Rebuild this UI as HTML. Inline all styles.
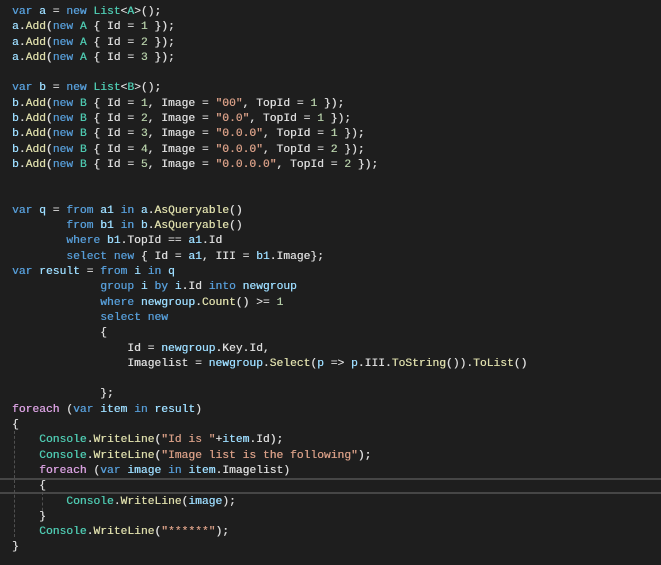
<!DOCTYPE html>
<html><head><meta charset="utf-8"><style>
html,body{margin:0;padding:0;background:#1e1e1e;width:661px;height:565px;overflow:hidden}
pre{margin:0;position:absolute;left:12px;top:5px;font-family:"Liberation Mono","DejaVu Sans Mono",monospace;font-size:11.3px;line-height:15.3px;color:#dcdcdc;text-shadow:0.3px 0 0 currentColor}
.k{color:#569cd6}.c{color:#d8a0df}.t{color:#4ec9b0}.m{color:#dcdcaa}.s{color:#d69d85}.n{color:#b5cea8}.v{color:#9cdcfe}
.cur{position:absolute;left:0;top:478px;width:661px;height:12px;border-top:2px solid #464646;border-bottom:2px solid #464646}
.g{position:absolute;width:0;border-left:1px dashed #505050}
</style></head><body>
<div class="cur"></div>
<div class="g" style="left:14px;top:431px;height:106px"></div>
<div class="g" style="left:42px;top:492px;height:24px"></div>
<pre><span class="k">var</span> <span class="v">a</span> = <span class="k">new</span> <span class="t">List</span>&lt;<span class="t">A</span>&gt;();
<span class="v">a</span>.<span class="m">Add</span>(<span class="k">new</span> <span class="t">A</span> { Id = <span class="n">1</span> });
<span class="v">a</span>.<span class="m">Add</span>(<span class="k">new</span> <span class="t">A</span> { Id = <span class="n">2</span> });
<span class="v">a</span>.<span class="m">Add</span>(<span class="k">new</span> <span class="t">A</span> { Id = <span class="n">3</span> });

<span class="k">var</span> <span class="v">b</span> = <span class="k">new</span> <span class="t">List</span>&lt;<span class="t">B</span>&gt;();
<span class="v">b</span>.<span class="m">Add</span>(<span class="k">new</span> <span class="t">B</span> { Id = <span class="n">1</span>, Image = <span class="s">"00"</span>, TopId = <span class="n">1</span> });
<span class="v">b</span>.<span class="m">Add</span>(<span class="k">new</span> <span class="t">B</span> { Id = <span class="n">2</span>, Image = <span class="s">"0.0"</span>, TopId = <span class="n">1</span> });
<span class="v">b</span>.<span class="m">Add</span>(<span class="k">new</span> <span class="t">B</span> { Id = <span class="n">3</span>, Image = <span class="s">"0.0.0"</span>, TopId = <span class="n">1</span> });
<span class="v">b</span>.<span class="m">Add</span>(<span class="k">new</span> <span class="t">B</span> { Id = <span class="n">4</span>, Image = <span class="s">"0.0.0"</span>, TopId = <span class="n">2</span> });
<span class="v">b</span>.<span class="m">Add</span>(<span class="k">new</span> <span class="t">B</span> { Id = <span class="n">5</span>, Image = <span class="s">"0.0.0.0"</span>, TopId = <span class="n">2</span> });


<span class="k">var</span> <span class="v">q</span> = <span class="k">from</span> <span class="v">a1</span> <span class="k">in</span> <span class="v">a</span>.<span class="m">AsQueryable</span>()
        <span class="k">from</span> <span class="v">b1</span> <span class="k">in</span> <span class="v">b</span>.<span class="m">AsQueryable</span>()
        <span class="k">where</span> <span class="v">b1</span>.TopId == <span class="v">a1</span>.Id
        <span class="k">select</span> <span class="k">new</span> { Id = <span class="v">a1</span>, III = <span class="v">b1</span>.Image};
<span class="k">var</span> <span class="v">result</span> = <span class="k">from</span> <span class="v">i</span> <span class="k">in</span> <span class="v">q</span>
             <span class="k">group</span> <span class="v">i</span> <span class="k">by</span> <span class="v">i</span>.Id <span class="k">into</span> <span class="v">newgroup</span>
             <span class="k">where</span> <span class="v">newgroup</span>.<span class="m">Count</span>() &gt;= <span class="n">1</span>
             <span class="k">select</span> <span class="k">new</span>
             {
                 Id = <span class="v">newgroup</span>.Key.Id,
                 Imagelist = <span class="v">newgroup</span>.<span class="m">Select</span>(<span class="v">p</span> =&gt; <span class="v">p</span>.III.<span class="m">ToString</span>()).<span class="m">ToList</span>()

             };
<span class="c">foreach</span> (<span class="k">var</span> <span class="v">item</span> <span class="k">in</span> <span class="v">result</span>)
{
    <span class="t">Console</span>.<span class="m">WriteLine</span>(<span class="s">"Id is "</span>+<span class="v">item</span>.Id);
    <span class="t">Console</span>.<span class="m">WriteLine</span>(<span class="s">"Image list is the following"</span>);
    <span class="c">foreach</span> (<span class="k">var</span> <span class="v">image</span> <span class="k">in</span> <span class="v">item</span>.Imagelist)
    {
        <span class="t">Console</span>.<span class="m">WriteLine</span>(<span class="v">image</span>);
    }
    <span class="t">Console</span>.<span class="m">WriteLine</span>(<span class="s">"******"</span>);
}</pre>
</body></html>
